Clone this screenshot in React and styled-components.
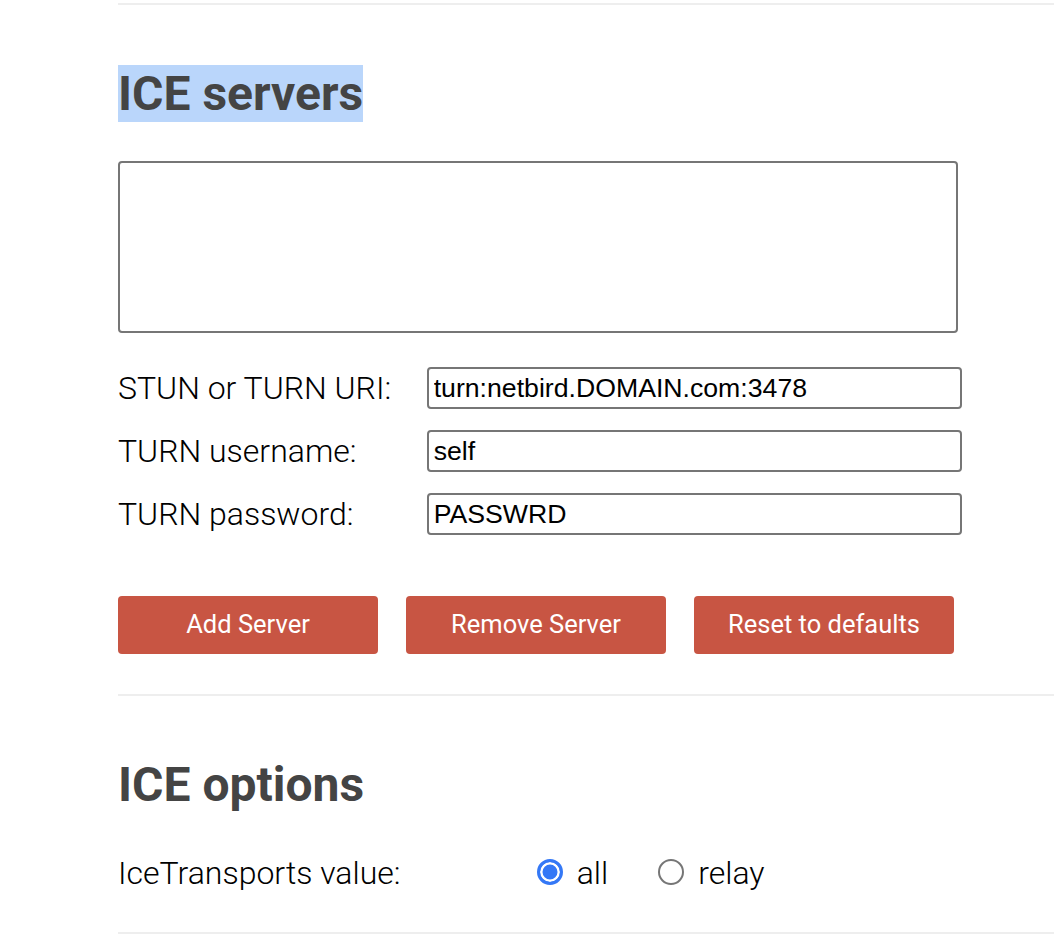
import React from "react";
import styled, { createGlobalStyle } from "styled-components";

const Global = createGlobalStyle`
  html, body { margin: 0; padding: 0; background: #fff; }
  body { overflow: hidden; font-family: Roboto, "Liberation Sans", sans-serif; }
`;

const Page = styled.div`
  padding: 3px 0 0 118px;
  width: 1100px;
`;

const Section = styled.section`
  border-top: 2px solid #eee;
  padding-bottom: ${(p) => p.$pb || 0}px;
`;

const Heading = styled.h2`
  margin: 60px 0 ${(p) => p.$mb || 0}px 0;
  font-family: Roboto, "Liberation Sans", sans-serif;
  font-size: 48px;
  font-weight: 700;
  line-height: normal;
  color: #444;
`;

const Selected = styled.span`
  background: #bad6fb;
`;

const ServerList = styled.textarea`
  display: block;
  box-sizing: border-box;
  width: 840px;
  height: 172px;
  margin: 0;
  border: 2px solid #767676;
  border-radius: 4px;
  resize: none;
  outline: none;
  background: #fff;
`;

const Rows = styled.div`
  display: flex;
  flex-direction: column;
  gap: 21px;
  margin-top: 34px;
`;

const Row = styled.div`
  display: flex;
  align-items: center;
  height: 42px;
`;

const Label = styled.label`
  width: ${(p) => p.$w}px;
  flex: none;
  font-family: Roboto, "Liberation Sans", sans-serif;
  font-weight: 300;
  font-size: 32px;
  color: #000;
  white-space: nowrap;
`;

const TextInput = styled.input`
  box-sizing: border-box;
  width: 535px;
  height: 42px;
  margin: 0;
  padding: 2px 5px;
  border: 2px solid #767676;
  border-radius: 4px;
  font-family: "Liberation Sans", Arial, sans-serif;
  font-size: 26.67px;
  color: #000;
  outline: none;
  background: #fff;
`;

const Buttons = styled.div`
  display: flex;
  gap: 28px;
  margin-top: 61px;
`;

const Button = styled.button`
  width: 260px;
  height: 58px;
  border: none;
  border-radius: 4px;
  background: #c85543;
  color: #fff;
  font-family: Roboto, "Liberation Sans", sans-serif;
  font-size: 25.5px;
  font-weight: 400;
  padding: 0 0 2px 0;
  cursor: pointer;
`;

const OptionsRow = styled.div`
  display: flex;
  align-items: center;
  margin-top: 41px;
  height: 38px;
`;

const Radio = styled.input.attrs({ type: "radio" })`
  appearance: none;
  box-sizing: border-box;
  width: 26px;
  height: 26px;
  margin: 0 14px 3px ${(p) => p.$ml || 0}px;
  border-radius: 50%;
  border: 2px solid #767676;
  background: #fff;
  flex: none;
  &:checked {
    border: 3px solid #3478f6;
    background: #3478f6;
    box-shadow: inset 0 0 0 2.5px #fff;
  }
`;

const OptionText = styled.span`
  font-family: Roboto, "Liberation Sans", sans-serif;
  font-weight: 300;
  font-size: 32px;
  color: #000;
`;

const Divider = styled.div`
  margin-top: 40px;
  border-top: 2px solid #eee;
`;

export default function App() {
  return (
    <>
      <Global />
      <Page>
        <Section $pb={40}>
          <Heading $mb={39}>
            <Selected>ICE servers</Selected>
          </Heading>
          <ServerList readOnly />
          <Rows>
            <Row>
              <Label $w={308.7}>STUN or TURN URI:</Label>
              <TextInput defaultValue="turn:netbird.DOMAIN.com:3478" />
            </Row>
            <Row>
              <Label $w={308.7}>TURN username:</Label>
              <TextInput defaultValue="self" />
            </Row>
            <Row>
              <Label $w={308.7}>TURN password:</Label>
              <TextInput defaultValue="PASSWRD" />
            </Row>
          </Rows>
          <Buttons>
            <Button>Add Server</Button>
            <Button>Remove Server</Button>
            <Button>Reset to defaults</Button>
          </Buttons>
        </Section>
        <Section>
          <Heading>ICE options</Heading>
          <OptionsRow>
            <Label $w={418.7}>IceTransports value:</Label>
            <Radio name="transports" defaultChecked />
            <OptionText>all</OptionText>
            <Radio name="transports" $ml={50} />
            <OptionText>relay</OptionText>
          </OptionsRow>
          <Divider />
        </Section>
      </Page>
    </>
  );
}
